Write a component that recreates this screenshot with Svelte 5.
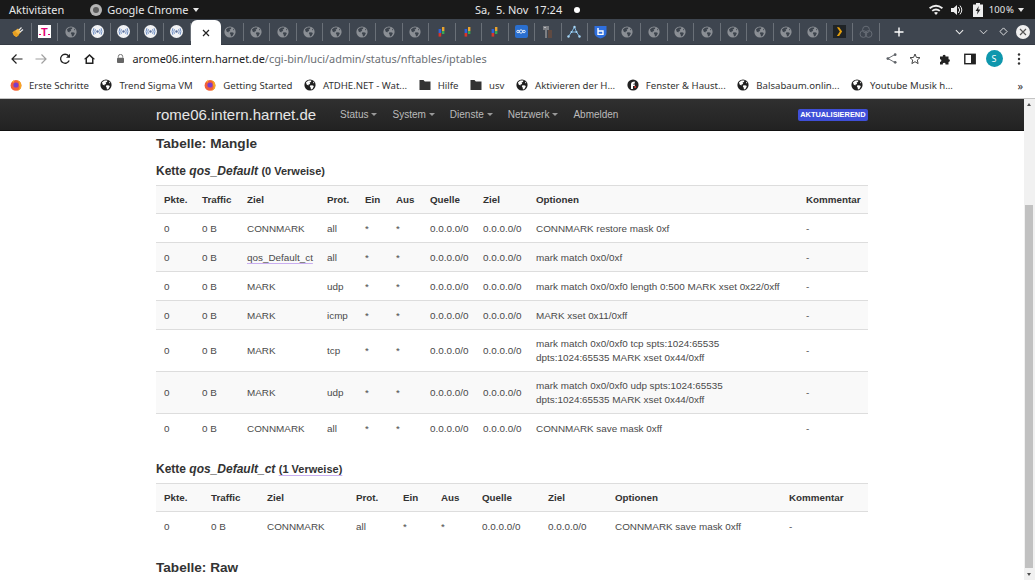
<script>
	const tabs = ['plug', 'tmobile', 'globe', 'wifi', 'wifi', 'wifi', 'wifi', 'active', 'globe', 'globe', 'globe', 'globe', 'globe', 'globe', 'globe', 'globe', 'bars', 'bars', 'bars', 'nc', 'tower', 'tree', 'bit', 'globe', 'globe', 'globe', 'globe', 'globe', 'globe', 'globe', 'globe', 'plex', 'ghost'];

	const bookmarks = [
		{ icon: 'fx', label: 'Erste Schritte' },
		{ icon: 'web', label: 'Trend Sigma VM' },
		{ icon: 'fx', label: 'Getting Started' },
		{ icon: 'web', label: 'ATDHE.NET - Wat...' },
		{ icon: 'folder', label: 'Hilfe' },
		{ icon: 'folder', label: 'usv' },
		{ icon: 'web', label: 'Aktivieren der H...' },
		{ icon: 'fenster', label: 'Fenster & Haust...' },
		{ icon: 'web', label: 'Balsabaum.onlin...' },
		{ icon: 'web', label: 'Youtube Musik h...' }
	];

	const menu = ['Status', 'System', 'Dienste', 'Netzwerk'];

	const heads = ['Pkte.', 'Traffic', 'Ziel', 'Prot.', 'Ein', 'Aus', 'Quelle', 'Ziel', 'Optionen', 'Kommentar'];

	const widths1 = [38, 45, 80, 38, 31, 34, 53, 53, 270, 70];
	const widths2 = [47, 56, 89, 47, 38, 41, 66, 67, 174, 87];

	const rows1 = [
		['CONNMARK', 'all', 'CONNMARK restore mask 0xf'],
		['qos_Default_ct', 'all', 'mark match 0x0/0xf'],
		['MARK', 'udp', 'mark match 0x0/0xf0 length 0:500 MARK xset 0x22/0xff'],
		['MARK', 'icmp', 'MARK xset 0x11/0xff'],
		['MARK', 'tcp', 'mark match 0x0/0xf0 tcp spts:1024:65535 dpts:1024:65535 MARK xset 0x44/0xff'],
		['MARK', 'udp', 'mark match 0x0/0xf0 udp spts:1024:65535 dpts:1024:65535 MARK xset 0x44/0xff'],
		['CONNMARK', 'all', 'CONNMARK save mask 0xff']
	];
</script>

{#snippet globe(fill, land)}
	<svg class="glob" viewBox="0 0 12 12">
		<circle cx="6" cy="6" r="5.6" fill={fill} />
		<path d="M2 3.2 4.6 1.6 7.4 1.5 7 3 5.6 3.6 6.2 5 4.6 5.4 4.4 6.6 2.6 5.4ZM6.6 6.2 9.2 6.4 9.8 7.6 8.4 10 7 10.4 6.6 8.4 5.8 7.2ZM9 2.6 10.4 4 9.2 4.2Z" fill={land} />
	</svg>
{/snippet}

{#snippet table(widths, rows)}
	<table>
		<colgroup>
			{#each widths as w}<col style="width: {w}px" />{/each}
		</colgroup>
		<thead>
			<tr>{#each heads as h}<th>{h}</th>{/each}</tr>
		</thead>
		<tbody>
			{#each rows as r}
				<tr class:wrapped={r[2].length > 60}>
					<td>0</td>
					<td>0 B</td>
					<td>{#if r[0] === 'qos_Default_ct'}<span class="spell">{r[0]}</span>{:else}{r[0]}{/if}</td>
					<td>{r[1]}</td>
					<td>*</td>
					<td>*</td>
					<td>0.0.0.0/0</td>
					<td>0.0.0.0/0</td>
					<td>{r[2]}</td>
					<td>-</td>
				</tr>
			{/each}
		</tbody>
	</table>
{/snippet}

<div class="screen">
	<header class="gnome">
		<span class="activities">Aktivitäten</span>
		<span class="appname">
			<svg viewBox="0 0 12 12" width="12" height="12"><circle cx="6" cy="6" r="6" fill="#b5b5b5" /><circle cx="6" cy="6" r="3" fill="#5c5c5c" /></svg>
			Google Chrome
			<i class="caret"></i>
		</span>
		<span class="clock">Sa,&nbsp; 5. Nov&nbsp; 17:24 <i class="dot"></i></span>
		<span class="status">
			<svg viewBox="0 0 14 12" width="14" height="12"><path d="M0 3.6Q7-2 14 3.6L12.8 5Q7 .6 1.2 5ZM2.6 6.2Q7 2.8 11.4 6.2L10.2 7.6Q7 5.2 3.8 7.6ZM5 8.8Q7 7.4 9 8.8L7 11Z" fill="#eee" /></svg>
			<svg viewBox="0 0 12 12" width="12" height="12"><path d="M0 4H2.6L6 1V11L2.6 8H0Z" fill="#eee" /><path d="M7.4 3Q10 6 7.4 9M9 1.6Q12.6 6 9 10.4" fill="none" stroke="#eee" /></svg>
			<svg class="batt" viewBox="0 0 10 14" width="10" height="14"><path d="M3 0H7V1.4H10V14H0V1.4H3Z" fill="#eee" /><path d="M5.8 3 2.6 8H4.6L4 11.6 7.4 6.4H5.2Z" fill="#222" /></svg>
			<span>100&#8202;%</span>
			<i class="caret"></i>
		</span>
	</header>

	<div class="tabstrip">
		{#each tabs as t}
			{#if t === 'active'}
				<div class="tab active">
					<svg viewBox="0 0 8 8" width="8" height="8"><path d="M1 1 7 7M7 1 1 7" stroke="#222" stroke-width="1.2" /></svg>
				</div>
			{:else}
				<div class="tab">
					{#if t === 'globe'}
						{@render globe('#8b8f95', '#3d444d')}
					{:else if t === 'plug'}
						<svg viewBox="0 0 13 12" width="13" height="12"><path d="M7 2.600 1.500 6.500 3 9.500 5.500 11 10 6Z" fill="#f4b63f" /><path d="M8 4 10.500 1.500M9 6 12 3.500" stroke="#e8e8e8" stroke-width="1.2" /><path d="M1.500 6.500 3.500 4.500 8 9 5.500 11 3 9.500Z" fill="#e79f20" /></svg>
					{:else if t === 'tmobile'}
						<div class="tm"><span>T</span><i class="tdots"></i></div>
					{:else if t === 'wifi'}
						<svg viewBox="0 0 13 13" width="13" height="13"><circle cx="6.5" cy="6.5" r="6.5" fill="#f2f3f5" /><circle cx="6.5" cy="6.5" r="1.2" fill="#5a6f9c" /><path d="M4.4 4.2Q3.2 6.5 4.4 8.8M8.6 4.2Q9.8 6.5 8.6 8.8M2.9 3.2Q1.2 6.5 2.9 9.8M10.1 3.2Q11.8 6.5 10.1 9.8" fill="none" stroke="#6f8fc4" /></svg>
					{:else if t === 'bars'}
						<svg viewBox="0 0 12 12" width="12" height="12"><path d="M6 1h2.4v4H6Z" fill="#e8a32e" /><path d="M2.6 3h2.6v4H2.6Z" fill="#2f62d8" /><path d="M6 5h2.4v3H6Z" fill="#35a853" /><path d="M2.6 7h2.6v3.6H2.6Z" fill="#d9352b" /></svg>
					{:else if t === 'nc'}
						<div class="nc">
							<svg viewBox="0 0 12 6" width="10" height="5"><circle cx="2.4" cy="3" r="1.5" fill="none" stroke="#fff" /><circle cx="6" cy="3" r="2" fill="none" stroke="#fff" /><circle cx="9.6" cy="3" r="1.5" fill="none" stroke="#fff" /></svg>
						</div>
					{:else if t === 'tower'}
						<svg viewBox="0 0 12 14" width="12" height="14"><path d="M1 1h6v4H5v8H3V5H1Z" fill="#7d7f84" /><path d="M6 5h4v8H6Z" fill="#5f4a42" /><path d="M2 2h2v1H2Z" fill="#b9bcc2" /></svg>
					{:else if t === 'tree'}
						<svg viewBox="0 0 14 14" width="14" height="14"><path d="M7.500 2 4.500 7 1.500 11.500M7.500 2 9.500 7 12.500 11.500M4.500 7H9.500" fill="none" stroke="#7db4e0" stroke-width="1" /><g fill="#a6d6f5"><circle cx="7.500" cy="2" r="1.200" /><circle cx="1.500" cy="11.500" r="1.200" /><circle cx="12.500" cy="11.500" r="1.200" /><circle cx="4.500" cy="7" r="1" /><circle cx="9.500" cy="7" r="1" /></g></svg>
					{:else if t === 'bit'}
						<svg viewBox="0 0 13 14" width="13" height="14"><path d="M.5 1H12.5V8Q12.5 11.5 6.5 13.5 .5 11.5 .5 8Z" fill="#2f6fde" /><path d="M4 3V9.4H9V6H4" fill="none" stroke="#fff" stroke-width="1.4" /></svg>
					{:else if t === 'plex'}
						<div class="plex"><svg viewBox="0 0 8 12" width="7" height="11"><path d="M1 1H3.6L7 6 3.6 11H1L4.4 6Z" fill="#e5a00d" /></svg></div>
					{:else if t === 'ghost'}
						<svg viewBox="0 0 14 14" width="14" height="14"><g fill="none" stroke="#666c75"><circle cx="7" cy="4.6" r="3.4" /><circle cx="4.4" cy="9" r="3.4" /><circle cx="9.6" cy="9" r="3.4" /></g></svg>
					{/if}
				</div>
			{/if}
		{/each}
		<svg class="plus" viewBox="0 0 10 10" width="10" height="10"><path d="M5 .5V9.500M.5 5H9.500" stroke="#fff" stroke-width="1.4" /></svg>
		<div class="winctl">
			<svg viewBox="0 0 10 6" width="9" height="6"><path d="M1 1 5 5 9 1" fill="none" stroke="#eee" stroke-width="1.2" /></svg>
			<svg class="sec" viewBox="0 0 10 6" width="9" height="6"><path d="M1 1 5 5 9 1" fill="none" stroke="#eee" stroke-width="1" /></svg>
			<svg viewBox="0 0 10 10" width="9" height="9"><path d="M5 1 9 5 5 9 1 5Z" fill="none" stroke="#eee" /></svg>
			<div class="closeball"><svg viewBox="0 0 8 8" width="8" height="8"><path d="M1 1 7 7M7 1 1 7" stroke="#555" stroke-width="1.2" /></svg></div>
		</div>
	</div>

	<div class="toolbar">
		<svg viewBox="0 0 12 12" width="12" height="12"><path d="M11.500 6H1M5.500 1.500 1 6 5.500 10.500" fill="none" stroke="#222" stroke-width="1.2" /></svg>
		<svg viewBox="0 0 12 12" width="12" height="12"><path d="M.5 6H11M6.500 1.500 11 6 6.500 10.500" fill="none" stroke="#a0a0a0" stroke-width="1.2" /></svg>
		<svg viewBox="0 0 12 12" width="12" height="12"><path d="M10.200 7.600A4.500 4.500 0 1 1 9.500 2.800" fill="none" stroke="#222" stroke-width="1.3" /><path d="M11 .8V4.800H7Z" fill="#222" /></svg>
		<svg viewBox="0 0 13 12" width="13" height="12"><path d="M6.500 1 .8 6.200H2.500V11H10.500V6.200H12.200ZM4 9.600V5.400L6.500 3 9 5.400V9.600Z" fill="#222" /></svg>
		<svg class="lock" viewBox="0 0 8 10" width="7" height="9"><path d="M1.500 4V2.800A2.500 2.500 0 0 1 6.500 2.800V4" fill="none" stroke="#666" /><rect y="4" width="8" height="6" rx="1" fill="#666" /></svg>
		<span class="url"><b>arome06.intern.harnet.de</b>/cgi-bin/luci/admin/status/nftables/iptables</span>
		<div class="tools">
			<svg viewBox="0 0 12 12" width="11" height="11"><path d="M10 1.500 2 6 10 10.500" fill="none" stroke="#5f6368" /><circle cx="10" cy="1.800" r="1.500" fill="#5f6368" /><circle cx="2" cy="6" r="1.500" fill="#5f6368" /><circle cx="10" cy="10.200" r="1.500" fill="#5f6368" /></svg>
			<svg viewBox="0 0 12 12" width="12" height="12"><path d="M6 1 7.400 4.400 11 4.700 8.300 7 9.100 10.600 6 8.700 2.900 10.600 3.700 7 1 4.700 4.600 4.400Z" fill="none" stroke="#444" /></svg>
			<svg class="puzzle" viewBox="0 0 12 12" width="12" height="12"><path d="M1 3.500H3.800A1.400 1.400 0 1 1 6.500 3.500H9.500V6.200A1.400 1.400 0 1 1 9.500 9V11.500H6.500A1.400 1.400 0 1 0 3.800 11.500H1V9A1.400 1.400 0 1 0 1 6.200Z" fill="#222" /></svg>
			<svg class="panel" viewBox="0 0 12 12" width="12" height="12"><rect x=".8" y="1.300" width="10.400" height="9.400" fill="none" stroke="#222" stroke-width="1.400" /><rect x="7" y="1.300" width="4" height="9.400" fill="#222" /></svg>
			<div class="avatar">S</div>
			<svg viewBox="0 0 4 12" width="4" height="12"><circle cx="2" cy="1.500" r="1.200" fill="#333" /><circle cx="2" cy="6" r="1.200" fill="#333" /><circle cx="2" cy="10.500" r="1.200" fill="#333" /></svg>
		</div>
	</div>

	<div class="bookmarks">
		{#each bookmarks as b}
			<span class="bm">
				{#if b.icon === 'fx'}
					<svg viewBox="0 0 12 12" width="12" height="12"><circle cx="6" cy="6.400" r="5.400" fill="#f2603a" /><path d="M6 1A5.400 5.400 0 0 1 11.400 6.400 5.400 5.400 0 0 1 7 11.700 4 4 0 0 0 9 6 4 4 0 0 0 6 1Z" fill="#f5a623" /><circle cx="6" cy="6" r="2.600" fill="#7b3fc9" /><path d="M2 3 4 .8 3.800 3.400Z" fill="#ffb52e" /></svg>
				{:else if b.icon === 'web'}
					{@render globe('#1f1f1f', '#fff')}
				{:else if b.icon === 'folder'}
					<svg viewBox="0 0 12 10" width="12" height="10"><path d="M.5 0H4.500L5.800 1.500H11.500V10H.5Z" fill="#333" /></svg>
				{:else}
					<svg viewBox="0 0 12 12" width="12" height="12"><circle cx="6" cy="6" r="5.600" fill="#222" /><path d="M4 10V5.400Q4 2.600 7.800 2.600V4.400Q6 4.400 6 5.600H7.800V7H6V10Z" fill="#fff" /><circle cx="8.200" cy="8" r="1" fill="#d9352b" /></svg>
				{/if}
				{b.label}
			</span>
		{/each}
		<span class="more">»</span>
	</div>

	<div class="viewport">
		<div class="page">
			<nav class="topnav">
				<div class="navin">
					<span class="brand">rome06.intern.harnet.de</span>
					{#each menu as m}
						<span class="mi">{m} <i class="mc"></i></span>
					{/each}
					<span class="mi">Abmelden</span>
					<span class="badge">AKTUALISIEREND</span>
				</div>
			</nav>
			<main class="content">
				<h2>Tabelle: Mangle</h2>
				<h3>Kette <em>qos_Default</em> <small>(0 Verweise)</small></h3>
				{@render table(widths1, rows1)}
				<h3 class="second">Kette <em>qos_Default_ct</em> <small class="spell">(1 Verweise)</small></h3>
				{@render table(widths2, [['CONNMARK', 'all', 'CONNMARK save mask 0xff']])}
				<h2 class="last">Tabelle: Raw</h2>
			</main>
		</div>
		<div class="scrollbar">
			<i class="up"></i>
			<div class="thumb"></div>
			<i class="down"></i>
		</div>
	</div>
</div>

<style>
	:global(body) {
		margin: 0;
		background: #fff;
		overflow: hidden;
	}

	.screen {
		width: 1035px;
		height: 580px;
		display: flex;
		flex-direction: column;
		overflow: hidden;
		font-family: 'Noto Sans', sans-serif;
	}

	.gnome {
		height: 19px;
		flex: none;
		background: #191919;
		color: #e8e8e8;
		font-size: 11px;
		display: flex;
		align-items: center;
		position: relative;
	}

	.activities {
		margin-left: 9px;
	}

	.appname {
		margin-left: 26px;
		display: flex;
		align-items: center;
		gap: 5px;
	}

	.caret {
		width: 0;
		height: 0;
		border: 3.500px solid transparent;
		border-top: 4px solid #e8e8e8;
		border-bottom: 0;
	}

	.clock {
		position: absolute;
		left: 475px;
		display: flex;
		align-items: center;
		white-space: pre;
	}

	.dot {
		width: 6px;
		height: 6px;
		border-radius: 50%;
		background: #fff;
		margin-left: 9px;
	}

	.status {
		margin-left: auto;
		margin-right: 11.500px;
		display: flex;
		align-items: center;
		gap: 8px;
		font-size: 9.500px;
	}

	.status .batt {
		margin-left: 2px;
	}

	.status span {
		margin-left: -2px;
	}

	.status .caret {
		margin-left: -4.500px;
	}

	.tabstrip {
		height: 26px;
		flex: none;
		background: #3e454f;
		display: flex;
		align-items: center;
		padding-left: 5px;
		border-bottom: 1px solid #353b44;
		box-sizing: border-box;
		position: relative;
	}

	.tab {
		width: 26.500px;
		height: 18px;
		flex: none;
		display: flex;
		align-items: center;
		justify-content: center;
		box-sizing: border-box;
		border-right: 1px solid #6a7078;
	}

	.tab.active {
		height: 25px;
		width: 30px;
		align-self: flex-end;
		background: #fff;
		border: 0;
		border-radius: 6px 6px 0 0;
		margin-right: -3.500px;
		position: relative;
		margin-bottom: -1px;
	}

	.glob {
		width: 12px;
		height: 12px;
		flex: none;
	}

	.tm {
		width: 13px;
		height: 13px;
		background: #fff;
		position: relative;
		display: flex;
		align-items: center;
		justify-content: center;
		font: bold 11px 'Liberation Sans', sans-serif;
		color: #e20074;
		overflow: hidden;
	}

	.tdots {
		position: absolute;
		left: 1px;
		right: 1px;
		bottom: 3px;
		height: 1.500px;
		background: linear-gradient(90deg, #e20074 0 2px, transparent 2px calc(100% - 2px), #e20074 calc(100% - 2px));
	}

	.nc {
		width: 13px;
		height: 13px;
		background: #2a6fd0;
		border-radius: 2px;
		display: flex;
		align-items: center;
		justify-content: center;
	}

	.plex {
		width: 13px;
		height: 13px;
		background: #1f2326;
		display: flex;
		align-items: center;
		justify-content: center;
	}

	.plus {
		margin-left: 14px;
		flex: none;
	}

	.winctl {
		margin-left: auto;
		margin-right: 5px;
		display: flex;
		align-items: center;
		gap: 11px;
	}

	.winctl .sec {
		margin-left: 4px;
	}

	.closeball {
		width: 14px;
		height: 14px;
		border-radius: 50%;
		background: #f0f0f0;
		display: flex;
		align-items: center;
		justify-content: center;
		margin-left: -2.500px;
	}

	.toolbar {
		height: 27px;
		flex: none;
		background: #fff;
		display: flex;
		align-items: center;
		padding-left: 11px;
		gap: 12px;
		box-sizing: border-box;
	}

	.lock {
		margin-left: 9px;
		margin-right: -3.500px;
	}

	.url {
		font-size: 10.900px;
		color: #6b6f74;
		white-space: nowrap;
	}

	.url b {
		font-weight: 400;
		color: #222;
	}

	.tools {
		margin-left: auto;
		margin-right: 14px;
		display: flex;
		align-items: center;
		gap: 12px;
	}

	.tools .puzzle {
		margin-left: 6px;
	}

	.tools .panel {
		margin-left: 1px;
	}

	.avatar {
		width: 17px;
		height: 17px;
		border-radius: 50%;
		background: #0f97ad;
		color: #fff;
		font-size: 9px;
		display: flex;
		align-items: center;
		justify-content: center;
		margin-left: -2.500px;
		margin-right: 2.500px;
	}

	.bookmarks {
		height: 27px;
		flex: none;
		box-sizing: border-box;
		background: #fff;
		border-bottom: 1px solid #c4c4c4;
		display: flex;
		align-items: center;
		padding-left: 10px;
		gap: 11.600px;
		font-size: 9.600px;
		color: #333;
	}

	.bm {
		display: flex;
		align-items: center;
		gap: 7px;
		white-space: nowrap;
	}

	.more {
		margin-left: auto;
		margin-right: 12px;
		font-size: 11px;
	}

	.viewport {
		flex: 1;
		min-height: 0;
		display: flex;
	}

	.page {
		flex: 1;
		min-width: 0;
		overflow: hidden;
		font-family: 'Liberation Sans', sans-serif;
		color: #4a4a4a;
	}

	.topnav {
		height: 32px;
		box-sizing: border-box;
		background: linear-gradient(#303030, #222);
		border-bottom: 1px solid #111;
	}

	.navin {
		width: 712px;
		margin-left: 156px;
		height: 100%;
		display: flex;
		align-items: center;
		color: #bbb;
		font-size: 10px;
	}

	.brand {
		font-size: 15px;
		color: #e6e6e6;
		margin-right: 24px;
	}

	.mi {
		margin-right: 15px;
		white-space: nowrap;
		display: flex;
		align-items: center;
		gap: 3px;
	}

	.mc {
		width: 0;
		height: 0;
		border: 3px solid transparent;
		border-top: 3px solid #999;
		border-bottom: 0;
	}

	.badge {
		margin-left: auto;
		background: #3f4fd8;
		color: #fff;
		font-size: 7.400px;
		font-weight: 700;
		line-height: 12px;
		padding: 0 2.500px;
		border-radius: 2px;
	}

	.content {
		margin-left: 156px;
		width: 712px;
	}

	h2 {
		font-size: 13.600px;
		line-height: 16px;
		margin: 5px 0 0;
		color: #333;
	}

	h3 {
		font-size: 12px;
		line-height: 14px;
		margin: 12px 0 0;
		color: #333;
	}

	h3 small {
		font-size: 11px;
		font-weight: 700;
	}

	.second {
		margin-top: 20px;
	}

	.last {
		margin-top: 20px;
	}

	.spell {
		text-decoration: underline #c9aef0 1px;
		text-underline-offset: 2px;
	}

	table {
		width: 712px;
		table-layout: fixed;
		border-collapse: collapse;
		margin-top: 7px;
		font-size: 9.900px;
		line-height: 14px;
	}

	th,
	td {
		padding: 8px 8px 6px;
		text-align: left;
		border-top: 1px solid #ddd;
	}

	th {
		background: #f9f9f9;
		font-size: 9.800px;
		font-weight: 700;
		color: #333;
		border-bottom: 1px solid #ddd;
		padding: 7px 8px 6px;
	}

	tbody tr.wrapped td {
		padding: 7px 8px 6px;
	}

	tbody tr:nth-child(even) td {
		background: #f9f9f9;
	}

	.scrollbar {
		width: 11px;
		flex: none;
		background: #f1f1f1;
		position: relative;
	}

	.thumb {
		position: absolute;
		top: 106px;
		bottom: 12px;
		left: 1px;
		right: 2px;
		background: #c1c1c1;
	}

	.up,
	.down {
		position: absolute;
		left: 3px;
		width: 0;
		height: 0;
		border: 2.500px solid transparent;
	}

	.up {
		top: 4px;
		border-bottom: 3px solid #505050;
		border-top: 0;
	}

	.down {
		bottom: 4px;
		border-top: 3px solid #505050;
		border-bottom: 0;
	}
</style>
